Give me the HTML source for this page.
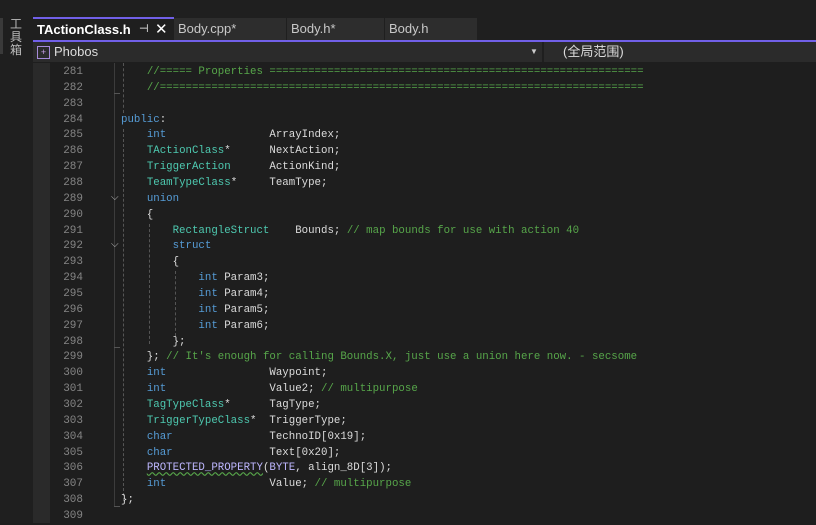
<!DOCTYPE html>
<html><head><meta charset="utf-8"><style>
body{margin:0;width:816px;height:523px;background:#1e1e1e;overflow:hidden;position:relative;font-family:"Liberation Sans","Noto Sans CJK SC",sans-serif}
.abs{position:absolute}
#left{left:0;top:0;width:33px;height:523px;background:#1f1f1f}
#gut{left:33px;top:63px;width:17px;height:460px;background:#2a2a2a}
#tabs{left:33px;top:0;width:783px;height:40px;background:#1f1f1f}
.tab{position:absolute;top:18px;height:22px;background:#2d2d2d;color:#c8c8c8;font-size:13px;line-height:21px;padding-left:4px;box-sizing:border-box}
#nav{left:33px;top:42px;width:783px;height:20px;background:#2b2b2b}
pre{margin:0;position:absolute;left:121px;top:65px;font-family:"Liberation Mono",monospace;font-size:10.75px;line-height:15.86px;color:#dcdcdc}
.ln{position:absolute;left:50px;top:65px;width:33px;text-align:right;font-family:"Liberation Mono",monospace;font-size:11px;line-height:15.86px;color:#858585;white-space:pre}
.k{color:#569cd6}.t{color:#4ec9b0}.c{color:#57a64a}.m{color:#beb7ff}
.g{position:absolute;width:0;border-left:1px dashed #555}
</style></head><body>
<div class="abs" id="left"></div>
<div class="abs" style="left:0;top:18px;width:3px;height:36px;background:#3a3a3a"></div>
<div class="abs" style="left:10px;top:18px;color:#bbb;font-size:12px;line-height:13px;width:13px">工<br>具<br>箱</div>
<div class="abs" id="tabs"></div>
<div class="tab" style="left:33px;width:141px;background:#1f1f1f;border-top:2px solid #7160e8;color:#fff;font-weight:bold;top:17px;height:23px">TActionClass.h<span style="position:absolute;left:106px;font-weight:normal;font-size:11px">⊣</span><span style="position:absolute;left:122px;font-weight:normal;font-size:15px">✕</span></div>
<div class="tab" style="left:174px;width:112px">Body.cpp*</div>
<div class="tab" style="left:287px;width:97px">Body.h*</div>
<div class="tab" style="left:385px;width:92px">Body.h</div>
<div class="abs" style="left:33px;top:40px;width:783px;height:2px;background:#7160e8"></div>
<div class="abs" id="nav"></div>
<div class="abs" style="left:37px;top:46px;width:11px;height:11px;border:1px solid #a58ad8;color:#c8a0e8;font-size:9px;line-height:10px;text-align:center">+</div>
<div class="abs" style="left:54px;top:43px;color:#ddd;font-size:13px;line-height:18px">Phobos</div>
<div class="abs" style="left:530px;top:44px;color:#ccc;font-size:8px;line-height:16px">▼</div>
<div class="abs" style="left:542px;top:42px;width:2px;height:20px;background:#1f1f1f"></div>
<div class="abs" style="left:563px;top:43px;color:#ddd;font-size:13px;line-height:18px">(全局范围)</div>
<div class="abs" id="gut"></div>
<div class="ln">281
282
283
284
285
286
287
288
289
290
291
292
293
294
295
296
297
298
299
300
301
302
303
304
305
306
307
308
309</div>
<div class="abs" style="left:114px;top:63px;width:1px;height:444px;background:#3c3c3c"></div>
<div class="abs" style="left:114px;top:93px;width:6px;height:1px;background:#555"></div>
<div class="abs" style="left:114px;top:506px;width:6px;height:1px;background:#555"></div>
<div class="abs" style="left:114px;top:347px;width:6px;height:1px;background:#555"></div>
<div class="abs" style="left:111px;top:192px;color:#bbb;font-size:10px">⌵</div>
<div class="abs" style="left:111px;top:239px;color:#bbb;font-size:10px">⌵</div>
<div class="g" style="left:123px;top:63px;height:50px"></div>
<div class="g" style="left:123px;top:129px;height:372px"></div>
<div class="g" style="left:149px;top:224px;height:120px"></div>
<div class="g" style="left:175px;top:271px;height:65px"></div>
<pre>    <span class="c">//===== Properties ==========================================================</span>
    <span class="c">//===========================================================================</span>

<span class="k">public</span>:
    <span class="k">int</span>                ArrayIndex;
    <span class="t">TActionClass</span>*      NextAction;
    <span class="t">TriggerAction</span>      ActionKind;
    <span class="t">TeamTypeClass</span>*     TeamType;
    <span class="k">union</span>
    {
        <span class="t">RectangleStruct</span>    Bounds; <span class="c">// map bounds for use with action 40</span>
        <span class="k">struct</span>
        {
            <span class="k">int</span> Param3;
            <span class="k">int</span> Param4;
            <span class="k">int</span> Param5;
            <span class="k">int</span> Param6;
        };
    }; <span class="c">// It's enough for calling Bounds.X, just use a union here now. - secsome</span>
    <span class="k">int</span>                Waypoint;
    <span class="k">int</span>                Value2; <span class="c">// multipurpose</span>
    <span class="t">TagTypeClass</span>*      TagType;
    <span class="t">TriggerTypeClass</span>*  TriggerType;
    <span class="k">char</span>               TechnoID[0x19];
    <span class="k">char</span>               Text[0x20];
    <span class="m" style="text-decoration:underline wavy #57a64a">PROTECTED_PROPERTY</span>(<span class="m">BYTE</span>, align_8D[3]);
    <span class="k">int</span>                Value; <span class="c">// multipurpose</span>
};
</pre>
</body></html>
